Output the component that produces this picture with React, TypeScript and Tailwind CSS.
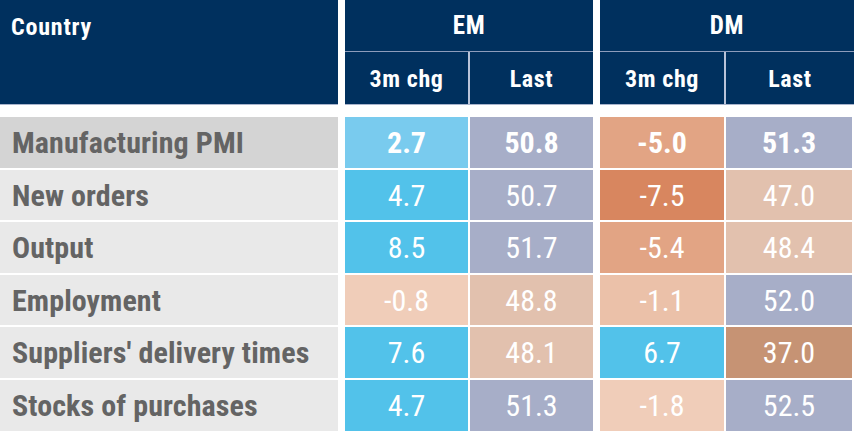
import React from "react"

const font = { fontFamily: '"Liberation Sans Narrow", "Roboto Condensed", "DejaVu Sans Condensed", "Liberation Sans", sans-serif' }

type Cell = { v: string; bg: string }
type Row = { label: string; bold?: boolean; labelBg: string; h: string; cells: Cell[] }

const rows: Row[] = [
  {
    label: "Manufacturing PMI",
    bold: true,
    labelBg: "bg-[#d4d4d4]",
    h: "h-[51px]",
    cells: [
      { v: "2.7", bg: "bg-[#79cbee]" },
      { v: "50.8", bg: "bg-[#a7aec8]" },
      { v: "-5.0", bg: "bg-[#e2a484]" },
      { v: "51.3", bg: "bg-[#a7aec8]" },
    ],
  },
  {
    label: "New orders",
    labelBg: "bg-[#e9e9e9]",
    h: "h-[50px]",
    cells: [
      { v: "4.7", bg: "bg-[#52c2ea]" },
      { v: "50.7", bg: "bg-[#a7aec8]" },
      { v: "-7.5", bg: "bg-[#d8865f]" },
      { v: "47.0", bg: "bg-[#e2c1ae]" },
    ],
  },
  {
    label: "Output",
    labelBg: "bg-[#e9e9e9]",
    h: "h-[51px]",
    cells: [
      { v: "8.5", bg: "bg-[#52c2ea]" },
      { v: "51.7", bg: "bg-[#a7aec8]" },
      { v: "-5.4", bg: "bg-[#e2a484]" },
      { v: "48.4", bg: "bg-[#e2c1ae]" },
    ],
  },
  {
    label: "Employment",
    labelBg: "bg-[#e9e9e9]",
    h: "h-[50px]",
    cells: [
      { v: "-0.8", bg: "bg-[#f0cdb9]" },
      { v: "48.8", bg: "bg-[#e2c1ae]" },
      { v: "-1.1", bg: "bg-[#ebc1a9]" },
      { v: "52.0", bg: "bg-[#a7aec8]" },
    ],
  },
  {
    label: "Suppliers' delivery times",
    labelBg: "bg-[#e9e9e9]",
    h: "h-[51px]",
    cells: [
      { v: "7.6", bg: "bg-[#52c2ea]" },
      { v: "48.1", bg: "bg-[#e2c1ae]" },
      { v: "6.7", bg: "bg-[#52c2ea]" },
      { v: "37.0", bg: "bg-[#c69374]" },
    ],
  },
  {
    label: "Stocks of purchases",
    labelBg: "bg-[#e9e9e9]",
    h: "h-[51px]",
    cells: [
      { v: "4.7", bg: "bg-[#52c2ea]" },
      { v: "51.3", bg: "bg-[#a7aec8]" },
      { v: "-1.8", bg: "bg-[#f0cdb9]" },
      { v: "52.5", bg: "bg-[#a7aec8]" },
    ],
  },
]

const widths = ["w-[123px]", "w-[123px]", "w-[124px]", "w-[126px]"]

function Group({ title, first, second }: { title: string; first: string; second: string }) {
  return (
    <div className={`flex flex-col bg-[#00305e] border-b border-[#a9b4cc] text-white font-bold tracking-[0.6px] ${first}`}>
      <div className="h-[52px] flex items-center justify-center text-[25px] border-b border-[#8d9cbb]">{title}</div>
      <div className="flex flex-1">
        <div className={`flex items-center justify-center text-[24px] pt-[2px] border-r-2 border-[#b9c3d8] ${second}`}>3m chg</div>
        <div className="flex flex-1 items-center justify-center text-[24px] pt-[2px]">Last</div>
      </div>
    </div>
  )
}

export default function App() {
  return (
    <div className="w-[855px] h-[432px] bg-white overflow-hidden" style={font}>
      <div className="flex h-[105px]">
        <div className="w-[338px] bg-[#00305e] border-b border-[#a9b4cc] text-white font-bold text-[24px] tracking-[0.8px] pl-[11px] pt-[9px]">
          Country
        </div>
        <div className="w-[7px]" />
        <Group title="EM" first="w-[248px]" second="w-[125px]" />
        <div className="w-[7px]" />
        <Group title="DM" first="w-[254px]" second="w-[126px]" />
      </div>
      <div className="h-[12px]" />
      <div className="flex flex-col gap-[2px]">
        {rows.map((r) => (
          <div key={r.label} className={`flex ${r.h}`}>
            <div className={`w-[338px] flex items-center pl-[12px] text-[30px] tracking-[0.1px] font-bold text-[#646464] ${r.labelBg}`}>
              {r.label}
            </div>
            <div className="w-[7px]" />
            {r.cells.map((c, i) => (
              <React.Fragment key={i}>
                <div
                  className={`flex items-center justify-center text-white text-[30px] ${widths[i]} ${c.bg} ${r.bold ? "font-bold" : "font-normal"}`}
                >
                  {c.v}
                </div>
                {i === 0 || i === 2 ? <div className="w-[2px]" /> : null}
                {i === 1 ? <div className="w-[7px]" /> : null}
              </React.Fragment>
            ))}
          </div>
        ))}
      </div>
    </div>
  )
}
